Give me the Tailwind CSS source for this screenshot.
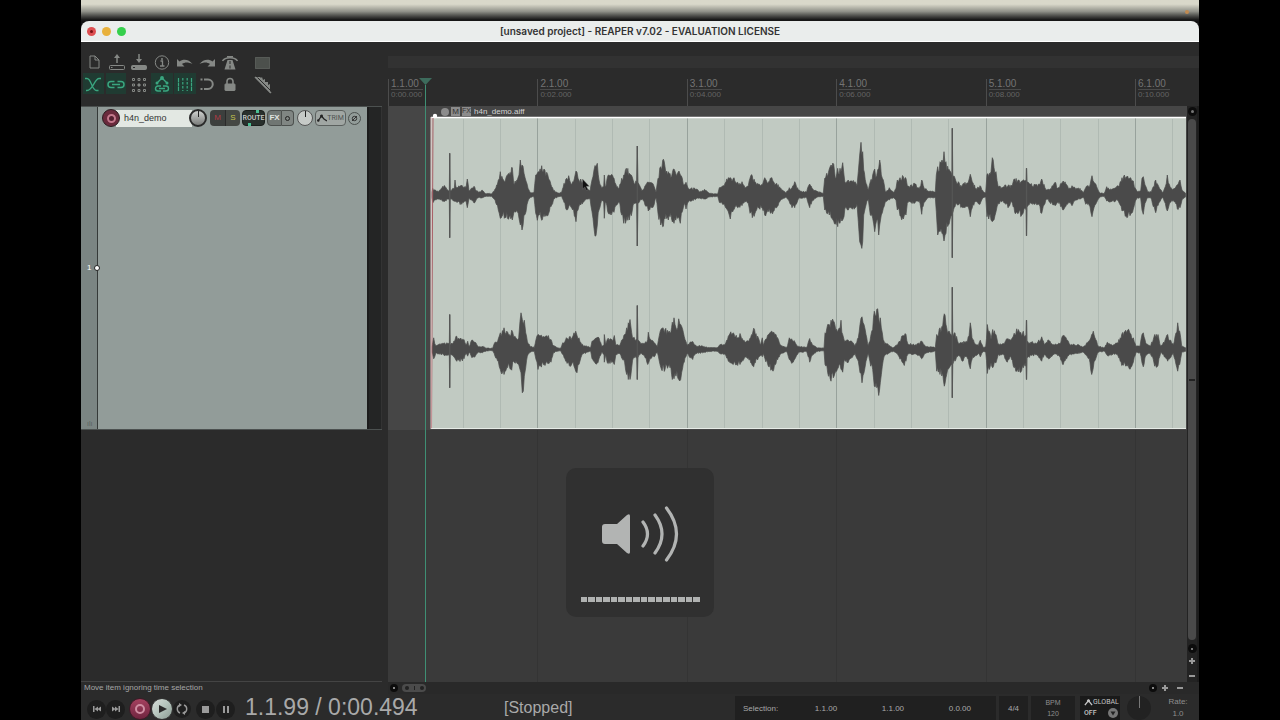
<!DOCTYPE html>
<html lang="en">
<head>
<meta charset="utf-8">
<title>[unsaved project] - REAPER v7.02</title>
<script src="https://cdn.jsdelivr.net/npm/@tailwindcss/browser@4"></script>
</head>
<body class="bg-black font-['Liberation_Sans',sans-serif]">
<div class="h-screen overflow-hidden px-[81px] flex flex-col">
  <div class="relative flex-none h-[21px] bg-linear-to-b from-[#d9d8ca] from-20% via-[#8f9088] via-55% to-[#161616] to-95%">
    <span class="absolute right-2.5 top-2.5 size-1 rounded-full bg-[#c08a50]"></span>
  </div>

  <div class="flex-1 min-h-0 flex flex-col bg-[#111]">
    <header class="relative flex-none h-[21px] rounded-t-lg bg-[#eaedec] flex items-center justify-center border-b border-white">
      <div class="absolute left-1.5 top-1.5 flex gap-[6px]">
        <button aria-label="Close" class="size-[9px] rounded-full bg-[#dd4f51] flex items-center justify-center"><span class="size-[3px] rounded-full bg-[#7a1014]"></span></button>
        <button aria-label="Minimize" class="size-[9px] rounded-full bg-[#e8b13c]"></button>
        <button aria-label="Zoom" class="size-[9px] rounded-full bg-[#35cf4b]"></button>
      </div>
      <h1 class="font-['Inter',sans-serif] text-[10px] font-semibold text-[#333] whitespace-nowrap">[unsaved project] - REAPER v7.02 - EVALUATION LICENSE</h1>
    </header>

    <main class="flex-1 min-h-0 flex bg-[#2b2b2b]">
      <!-- Toolbar and track control panel -->
      <section class="flex-none w-[307px] flex flex-col">
        <div class="flex-none h-16 pt-2 pl-[2px] flex items-start gap-[9px] text-[#858885]">
          <div class="grid grid-cols-7 w-[158px]">
            <button aria-label="New project" class="h-[23px] flex items-center justify-center"><svg width="20" height="20" viewBox="0 0 20 20" fill="none" stroke="currentColor"><path d="M6 4h5l4 4v8H6zM11 4v4h4"/></svg></button>
            <button aria-label="Open project" class="h-[23px] flex items-center justify-center"><svg width="20" height="20" viewBox="0 0 20 20" fill="none" stroke="currentColor"><rect x="2.500" y="13.500" width="15" height="4" rx="1"/><path d="M10 11V5" stroke-width="1.500"/><path d="M4 15.500h1.500"/><path d="M7 6l3-4 3 4z" fill="currentColor" stroke="none"/></svg></button>
            <button aria-label="Save project" class="h-[23px] flex items-center justify-center"><svg width="20" height="20" viewBox="0 0 20 20" fill="none" stroke="currentColor"><rect x="2.500" y="13.500" width="15" height="4" rx="1" fill="currentColor"/><path d="M10 2v6" stroke-width="1.500"/><path d="M7 7l3 4 3-4z" fill="currentColor" stroke="none"/><path d="M4 15.500h2" stroke="#2b2b2b"/></svg></button>
            <button aria-label="Project settings" class="h-[23px] flex items-center justify-center"><svg width="20" height="20" viewBox="0 0 20 20" fill="none" stroke="currentColor"><circle cx="10" cy="10.500" r="6.700"/><path d="M8.500 9h2v5M8 14h4.500" stroke-width="1.300"/><circle cx="10" cy="7" r="1" fill="currentColor" stroke="none"/></svg></button>
            <button aria-label="Undo" class="h-[23px] flex items-center justify-center"><svg width="20" height="20" viewBox="0 0 20 20" fill="currentColor"><path d="M2 7v7.500h7.500L7 12c3-2 6-2 10.500 0C14 7 8 6.500 4.500 9.500z"/></svg></button>
            <button aria-label="Redo" class="h-[23px] flex items-center justify-center"><svg width="20" height="20" viewBox="0 0 20 20" fill="currentColor"><path d="M18 7v7.500h-7.500L13 12c-3-2-6-2-10.500 0C6 7 12 6.500 15.500 9.500z"/></svg></button>
            <button aria-label="Metronome" class="h-[23px] flex items-center justify-center"><svg width="20" height="20" viewBox="0 0 20 20" fill="none" stroke="currentColor"><path d="M2.500 9C5 4.500 15 4.500 17.500 9" stroke-width="1.500"/><path d="M7.500 8h5l3 9.500h-11zM7 4h6v1.500H7z" fill="currentColor" stroke="none"/><path d="M10 9v3M10 13.500v3" stroke="#2b2b2b"/></svg></button>
            <button aria-label="Auto crossfade" class="h-[21px] mr-[2px] bg-[#203b32] text-[#3aa780] flex items-center justify-center"><svg width="20" height="20" viewBox="0 0 20 20" fill="none" stroke="currentColor" stroke-width="1.300"><path d="M2 4.500h2C8.500 4.500 8.500 16.500 13.500 16.500h2M18 4.500h-2C11.500 4.500 10 16.500 4 16.500H3"/></svg></button>
            <button aria-label="Item grouping" class="h-[21px] mr-[2px] bg-[#203b32] text-[#3aa780] flex items-center justify-center"><svg width="20" height="20" viewBox="0 0 20 20" fill="none" stroke="currentColor" stroke-width="1.500"><path d="M8.500 7.500H5a3 3 0 000 6h3.500M11.500 7.500H15a3 3 0 010 6h-3.500M6 10.500h8"/></svg></button>
            <button aria-label="Ripple editing" class="h-[21px] flex items-center justify-center"><svg width="20" height="20" viewBox="0 0 20 20" fill="none" stroke="currentColor"><path d="M3.500 4.500h2v2h-2zM9 4.500h2v2H9zM14.500 4.500h2v2h-2zM3.500 10h2v2h-2zM14.500 10h2v2h-2zM3.500 15.500h2v2h-2zM9 15.500h2v2H9zM14.500 15.500h2v2h-2z"/><path d="M9 10h2v2H9z" fill="currentColor"/></svg></button>
            <button aria-label="Move envelopes" class="h-[21px] bg-[#203b32] text-[#3aa780] flex items-center justify-center"><svg width="20" height="20" viewBox="0 0 20 20" fill="none" stroke="currentColor" stroke-width="1.400"><path d="M5 9l5-5 5 5"/><circle cx="10" cy="4" r="1.200" fill="currentColor"/><circle cx="5" cy="9" r=".8"/><circle cx="15" cy="9" r=".8"/><path d="M9 12H6a2.500 2.500 0 000 5h3M11 12h3a2.500 2.500 0 010 5h-3M7 14.500h6"/></svg></button>
            <button aria-label="Grid lines" class="h-[21px] ml-px bg-[#203b32] text-[#3aa780] flex items-center justify-center"><svg width="20" height="20" viewBox="0 0 20 20" fill="none" stroke="currentColor" stroke-width="1.200"><path d="M3.500 4v13M16.500 4v13" stroke-dasharray="4 .5"/><path d="M7.800 4v13M12.200 4v13" stroke-dasharray="2.500 1.500"/></svg></button>
            <button aria-label="Snap" class="h-[21px] flex items-center justify-center"><svg width="20" height="20" viewBox="0 0 20 20" fill="none" stroke="currentColor" stroke-width="2"><path d="M7 5.500h4a4.700 4.700 0 010 9.500H7"/><path d="M3.500 5.500h2M3.500 15h2"/></svg></button>
            <button aria-label="Lock" class="h-[21px] flex items-center justify-center"><svg width="20" height="20" viewBox="0 0 20 20" fill="none" stroke="currentColor"><rect x="5" y="10" width="10" height="6.500" rx=".5" fill="currentColor"/><path d="M7 10V7.500a3 3 0 016 0V10" stroke-width="1.600"/></svg></button>
          </div>
          <div class="flex flex-col">
            <button aria-label="Selection" class="h-[23px] flex items-center"><svg width="22" height="20" viewBox="0 0 22 20"><rect x="5.500" y="5.500" width="14" height="11" fill="#4c504c" stroke="#747a74" stroke-dasharray="1 1"/></svg></button>
            <button aria-label="Edit tools" class="h-[21px] flex items-center"><svg width="22" height="20" viewBox="0 0 22 20"><path d="M5 3h5l1 1 1-1 1 3 2-1v3h3v3l2-1v9z" fill="currentColor"/><path d="M5 3l16 16" stroke="currentColor" stroke-width="1.500"/><path d="M7.500 3.500L20 16" stroke="#2b2b2b"/></svg></button>
          </div>
        </div>

        <div class="flex-none h-[324px] w-[301px] flex border-y border-[#4c5150]">
          <div class="relative w-[17px] bg-[#7b8583] border-r border-[#353938] flex items-center pl-1.5 text-[8px] text-white">1
            <span class="absolute -right-[3px] top-1/2 size-[6px] -translate-y-1/2 rounded-full bg-white border border-[#222]"></span>
            <span class="absolute left-1.5 bottom-0 text-[7px] text-[#59615f]">ılı</span>
          </div>
          <div class="flex-1 bg-[#929c99] pt-[2px] pl-1">
            <div class="flex items-center h-[18px]">
              <button aria-label="Record arm" class="z-10 size-[18px] rounded-full bg-[#6a2a3c] border border-[#2c1c20] flex items-center justify-center"><span class="size-[9px] rounded-full border-2 border-[#c4788c] bg-[#542030]"></span></button>
              <input aria-label="Track name" value="h4n_demo" class="-ml-1 pl-2 w-[76px] h-[17px] bg-[#e3e8e3] text-[9px] text-[#333]">
              <button aria-label="Volume" class="z-10 -ml-[3px] size-[18px] rounded-full bg-linear-to-b from-[#d0d2d0] to-[#7a7c7a] border-2 border-[#2a2a2a] flex items-start justify-center"><span class="w-px h-1.5 bg-[#222]"></span></button>
              <button aria-label="Mute" class="ml-[3px] w-[15px] h-4 rounded-l-sm bg-[#3c3f3d] text-[8px] text-[#b03a44]">M</button>
              <button aria-label="Solo" class="w-[15px] h-4 rounded-r-sm bg-[#454844] border-l border-[#2a2a2a] text-[8px] text-[#c6c44c]">S</button>
              <button class="relative ml-[2px] w-[23px] h-4 rounded-sm bg-[#29302d] border border-[#1c1f1d] font-['Roboto',sans-serif] text-[7px] font-medium text-[#c8ccc8] flex items-center justify-center">ROUTE<span class="absolute left-[5px] -bottom-px size-[3px] bg-[#49c094]"></span><span class="absolute right-[5px] -top-px size-[3px] bg-[#49c094]"></span></button>
              <button class="ml-[2px] w-[15px] h-4 rounded-l-sm bg-[#707673] border border-[#4c504e] text-[8px] font-bold text-[#e0e4e0] flex items-center justify-center">FX</button>
              <button aria-label="FX bypass" class="w-[12px] h-4 rounded-r-sm bg-[#808683] border border-l-0 border-[#4c504e] flex items-center justify-center"><span class="size-[5px] rounded-full border border-[#222]"></span></button>
              <button aria-label="Pan" class="ml-[3px] size-[16px] rounded-full bg-[#c6cac7] border border-[#555] flex items-start justify-center"><span class="w-px h-1.5 bg-[#222]"></span></button>
              <button class="ml-[2px] w-[31px] h-4 rounded-sm bg-[#a0a6a3] border border-[#5b605e] font-['Roboto',sans-serif] text-[7px] text-[#4f5452] flex items-center justify-center"><svg width="10" height="10" viewBox="0 0 10 10" fill="none" stroke="#222" stroke-width="1.300"><path d="M1 8l3.500-5L7 6l3 2"/><circle cx="4.500" cy="3" r=".8" fill="#222"/><circle cx="1.300" cy="7.500" r=".6"/></svg>TRIM</button>
              <button aria-label="Phase" class="ml-[2px] size-[13px] rounded-full border border-[#4b504e] text-[#333] flex items-center justify-center"><svg width="9" height="9" viewBox="0 0 9 9" fill="none" stroke="currentColor"><circle cx="4.500" cy="4.500" r="2.200"/><path d="M2 7l5-5"/></svg></button>
            </div>
          </div>
          <div class="w-[15px] bg-[#242525] border-l-2 border-[#1c1c1c] flex justify-end"><span class="w-px bg-[#333]"></span></div>
        </div>

        <div class="flex-1"></div>
        <p class="flex-none w-[301px] h-[13px] border-t border-[#444] pl-[3px] text-[8px] leading-[11px] text-[#a5a5a5] whitespace-nowrap">Move item ignoring time selection</p>
      </section>

      <!-- Arrange view -->
      <section class="relative flex-1 min-w-0 flex flex-col">
        <div class="flex-none mt-3.5 h-3 bg-[#323232]"></div>
        <div class="flex-none h-[38px] pt-[11px] pr-3 flex text-[#747474] whitespace-nowrap">
          <div class="w-[18.7%] border-l border-[#4c4c4c] pl-[2px]"><span class="block w-8 border-b border-[#4a4a4a] text-[10px] leading-[10px]">1.1.00</span><span class="block text-[8px] leading-[9px] text-[#646464]">0:00.000</span></div>
          <div class="w-[18.7%] border-l border-[#4c4c4c] pl-[2px]"><span class="block w-8 border-b border-[#4a4a4a] text-[10px] leading-[10px]">2.1.00</span><span class="block text-[8px] leading-[9px] text-[#646464]">0:02.000</span></div>
          <div class="w-[18.7%] border-l border-[#4c4c4c] pl-[2px]"><span class="block w-8 border-b border-[#4a4a4a] text-[10px] leading-[10px]">3.1.00</span><span class="block text-[8px] leading-[9px] text-[#646464]">0:04.000</span></div>
          <div class="w-[18.7%] border-l border-[#4c4c4c] pl-[2px]"><span class="block w-8 border-b border-[#4a4a4a] text-[10px] leading-[10px]">4.1.00</span><span class="block text-[8px] leading-[9px] text-[#646464]">0:06.000</span></div>
          <div class="w-[18.7%] border-l border-[#4c4c4c] pl-[2px]"><span class="block w-8 border-b border-[#4a4a4a] text-[10px] leading-[10px]">5.1.00</span><span class="block text-[8px] leading-[9px] text-[#646464]">0:08.000</span></div>
          <div class="flex-1 min-w-0 border-l border-[#4c4c4c] pl-[2px]"><span class="block w-8 border-b border-[#4a4a4a] text-[10px] leading-[10px]">6.1.00</span><span class="block text-[8px] leading-[9px] text-[#646464]">0:10.000</span></div>
        </div>

        <div class="flex-1 min-h-0 flex">
          <div class="flex-1 min-w-0 flex flex-col bg-[#3a3a3a]">
            <div class="relative flex-none h-[324px]">
              <svg class="block w-full h-full" viewBox="0 0 799 324" preserveAspectRatio="none">
                <rect width="799" height="324" fill="#464646"/>
                <rect x="43" y="11" width="755" height="312" fill="#c1cac2"/>
                <path id="beats" stroke="#b0bab3" stroke-width="1" fill="none"/>
                <path id="bars" stroke="#98a29c" stroke-width="1" fill="none"/>
                <g fill="#4a4a4a" stroke="#4a4a4a" stroke-width=".7"><path id="waveL"/><path id="waveR"/></g>
                <path id="spikes" stroke="#565756" stroke-width="1.300"/>
                <path d="M43 11.500H798" stroke="#fff" stroke-width="1.600"/>
                <path d="M43 322.500H798" stroke="#e6ebe6"/>
                <path d="M43.500 322L45 12" stroke="#a85f66" fill="none"/>
                <path d="M43 11V323" stroke="#e0c4c4"/>
                <circle cx="47" cy="10" r="2.200" fill="#fff"/>
                <path d="M194.500 73v10l2.300-2 1.700 3.500 1.500-.8-1.700-3.400h3z" fill="#111" stroke="#777" stroke-width=".4"/>
              </svg>
              <div class="absolute left-[53px] top-0 h-[11px] flex items-center gap-[2px] text-[8px] text-[#d4d4d4]">
                <span class="size-[8px] rounded-full bg-[#8c8c8c]"></span>
                <button class="w-[9px] h-[9px] bg-[#8c8c8c] text-[#333] flex items-center justify-center">M</button>
                <button class="w-[9px] h-[9px] bg-[#8c8c8c] text-[#333] text-[7px] flex items-center justify-center">FX</button>
                <span class="pl-px">h4n_demo.aiff</span>
              </div>
            </div>
            <svg class="block w-full flex-1 min-h-0" viewBox="0 0 799 252" preserveAspectRatio="none"><path id="lowerBars" stroke="#343434" fill="none"/></svg>
          </div>
          <div class="flex-none w-3 flex flex-col items-center bg-[#232323] border-r-2 border-[#1d1d1d]">
            <button aria-label="Scroll up" class="mt-px size-[9px] rounded-full bg-[#0c0c0c] flex items-center justify-center"><span class="size-[3px] rounded-full bg-[#777]"></span></button>
            <div class="mt-[3px] flex-1 w-[8px] rounded-sm bg-[#4a4a4a] flex items-center justify-center"><span class="w-1.5 h-0.5 bg-[#222]"></span></div>
            <button aria-label="Scroll down" class="mt-[4px] size-[9px] rounded-full bg-[#0c0c0c] flex items-center justify-center"><span class="size-[2px] bg-[#777]"></span></button>
            <button aria-label="Zoom in vertically" class="mt-[4px] text-[#999]"><svg width="8" height="8" viewBox="0 0 8 8" stroke="currentColor" stroke-width="2"><path d="M1 4h6M4 1v6"/></svg></button>
            <button aria-label="Zoom out vertically" class="mt-[7px] mb-[2px] text-[#999]"><svg width="8" height="8" viewBox="0 0 8 8" stroke="currentColor" stroke-width="2"><path d="M1 4h6"/></svg></button>
          </div>
        </div>

        <div class="flex-none h-3 pr-[15px] pl-[2px] flex items-center bg-[#292929]">
          <button aria-label="Scroll left" class="size-[8px] rounded-full bg-[#0c0c0c] flex items-center justify-center"><span class="size-[2px] bg-[#888]"></span></button>
          <div class="ml-1 w-6 h-[8px] rounded-full bg-[#4b4b4b] flex items-center justify-around"><span class="size-1 rounded-full bg-[#222]"></span><span class="w-px h-1 bg-[#222]"></span><span class="size-1 rounded-full bg-[#222]"></span></div>
          <div class="flex-1"></div>
          <button aria-label="Scroll right" class="size-[8px] rounded-full bg-[#0c0c0c] flex items-center justify-center"><span class="size-[2px] bg-[#888]"></span></button>
          <button aria-label="Zoom in" class="ml-1 text-[#999]"><svg width="8" height="8" viewBox="0 0 8 8" stroke="currentColor" stroke-width="2"><path d="M1 4h6M4 1v6"/></svg></button>
          <button aria-label="Zoom out" class="ml-[7px] text-[#999]"><svg width="8" height="8" viewBox="0 0 8 8" stroke="currentColor" stroke-width="2"><path d="M1 4h6"/></svg></button>
        </div>

        <!-- Play cursor -->
        <div class="absolute left-[31px] top-9 bottom-3 w-[13px] flex flex-col items-center pointer-events-none">
          <svg width="13" height="7" viewBox="0 0 13 7"><path d="M0 0h13L6.500 7z" fill="#3d6b5c"/></svg>
          <span class="flex-1 w-px bg-[#3f8f74]"></span>
        </div>
      </section>
    </main>

    <footer class="flex-none h-[26px] bg-[#2b2b2b] flex items-start overflow-hidden text-[#a9a9a9]">
      <div class="flex items-center h-[30px] pl-1.5 text-[#9a9a9a]">
        <button aria-label="Go to start" class="size-[19px] rounded-full bg-[#1e1e1e] flex items-center justify-center"><svg width="8" height="8" viewBox="0 0 8 8" fill="currentColor"><path d="M0 1h1.500v6H0zM1.500 4L5 1.500v5zM4.500 4L8 1.500v5z"/></svg></button>
        <button aria-label="Go to end" class="size-[19px] rounded-full bg-[#1e1e1e] flex items-center justify-center"><svg width="8" height="8" viewBox="0 0 8 8" fill="currentColor"><path d="M8 1H6.500v6H8zM6.500 4L3 1.500v5zM3.500 4L0 1.500v5z"/></svg></button>
        <button aria-label="Record" class="ml-1 size-[22px] rounded-full bg-linear-to-b from-[#a5415f] to-[#702540] border border-[#3d1a26] flex items-center justify-center"><span class="size-[10px] rounded-full border-2 border-[#cf8ea2]"></span></button>
        <button aria-label="Play" class="size-[22px] rounded-full bg-linear-to-br from-[#d9dfda] via-[#b4c4bc] to-[#8a9a92] border border-[#333] flex items-center justify-center text-[#2a2a2a]"><svg width="10" height="10" viewBox="0 0 10 10" fill="currentColor"><path d="M2 1l8 4-8 4z"/></svg></button>
        <button aria-label="Repeat" class="size-[18px] rounded-full bg-[#1e1e1e] flex items-center justify-center"><svg width="12" height="12" viewBox="0 0 12 12" fill="none" stroke="currentColor" stroke-width="1.400"><path d="M4 10A4.300 4.300 0 014 2M8 2a4.300 4.300 0 010 8"/><path d="M3 0l3 2-3 2zM9 8l-3 2 3 2z" fill="currentColor" stroke="none"/></svg></button>
        <button aria-label="Stop" class="ml-[5px] size-[19px] rounded-full bg-[#1e1e1e] flex items-center justify-center"><span class="size-[7px] bg-current"></span></button>
        <button aria-label="Pause" class="ml-px size-[19px] rounded-full bg-[#1e1e1e] flex items-center justify-center gap-[2px]"><span class="w-[2px] h-[7px] bg-current"></span><span class="w-[2px] h-[7px] bg-current"></span></button>
      </div>
      <div class="ml-2.5 w-[259px] text-[23px] leading-[27px] whitespace-nowrap">1.1.99 / 0:00.494</div>
      <div class="text-[16px] leading-[28px]">[Stopped]</div>
      <div class="flex-1"></div>
      <div class="mt-[2px] flex h-[25px] gap-[3px] text-[8px]">
        <div class="w-[261px] pl-2 pr-[25px] bg-[#202020] flex items-center justify-between"><span>Selection:</span><span class="pl-1">1.1.00</span><span class="px-3">1.1.00</span><span>0.0.00</span></div>
        <button class="w-[29px] bg-[#202020]">4/4</button>
        <div class="w-11 bg-[#202020] flex flex-col items-center gap-[2px] text-[7px] leading-[9px] pt-[2px] text-[#8e8e8e]"><span>BPM</span><span>120</span></div>
        <div class="ml-[2px] w-10 bg-[#1a1a1a] font-['Roboto',sans-serif] leading-[10px] pt-[1px] pl-[4px] text-[#c4c4c4]">
          <div class="flex items-center"><svg width="9" height="9" viewBox="0 0 10 10" fill="none" stroke="currentColor" stroke-width="1.500"><path d="M1 8l4-5 4 5"/><circle cx="5" cy="3" r="1" fill="currentColor"/></svg><span class="text-[7px]">GLOBAL</span></div>
          <div class="flex items-center justify-between pt-px pr-[2px]"><span class="text-[7px] font-medium">OFF</span><svg width="10" height="10" viewBox="0 0 10 10"><circle cx="5" cy="5" r="5" fill="#777"/><path d="M2.500 3.500h5L5 7.500z" fill="#222"/></svg></div>
        </div>
        <button aria-label="Play rate" class="ml-[4px] size-6 rounded-full bg-[#222] flex justify-center"><span class="w-px h-3 bg-[#777]"></span></button>
        <label class="w-[45px] pl-[3px] flex flex-col items-center text-[8px] leading-[12px] text-[#8e8e8e]"><span>Rate:</span><span>1.0</span></label>
      </div>
    </footer>
  </div>
</div>

<!-- Volume overlay -->
<div class="fixed left-1/2 top-[468px] -translate-x-1/2 w-[148px] h-[149px] rounded-[10px] bg-[#303030] flex flex-col items-center">
  <svg class="mt-[36px]" width="80" height="60" viewBox="0 0 80 60" fill="none">
    <path d="M5 20h12l10-9q3-2 3 1v36q0 3-3 1l-10-9H5q-3 0-3-3V23q0-3 3-3z" fill="#b2b4b3"/>
    <path d="M43 18q9 12 0 24M55 11q14 19 0 38M66.500 4q20 26 0 52" stroke="#b2b4b3" stroke-width="3.200" stroke-linecap="round"/>
  </svg>
  <div class="mt-[33px] w-[119px] h-[5px] grid grid-cols-16 gap-px" id="level"></div>
</div>

<script>
const $ = id => document.getElementById(id);
$('level').innerHTML = '<i class="bg-[#b0b2b1]"></i>'.repeat(16);

// Beat and bar lines of the time grid
let beats = '', bars = '', lower = '';
for (let k = 2; k < 22; k++) {
  const x = Math.round(37.35 * k) + 0.5;
  if (k % 4) beats += `M${x} 13V322`;
  else { bars += `M${x} 12V322`; lower += `M${x} 0V252`; }
}
$('beats').setAttribute('d', beats);
$('bars').setAttribute('d', bars);
$('lowerBars').setAttribute('d', lower);

// Peaks: position, height above and depth below the centre, in thirds of a unit
const left = [
 [420,`35 8 8,38 20 22,47 14 14,55 10 12,72 28 20,85 12 12,88 14 14,89 125 128,90.5 15 12,103 20 18,105 45 20,110 22 22,125 30 28,138 22 18,142 48 38,147 12 10,162 26 24,175 8 8,187 14 8,195 5 5,215 4 4,225 18 14,235 45 45,241 70 70,248 48 60,258 52 68,268 60 65,277 82 75,281 35 55,292 45 50,297 60 70,301 105 90,306 90 105,312 65 60,318 42 50,324 20 18,332 6 6,342 8 6,347 60 55,352 65 76,358 70 60,365 88 76,372 78 65,380 68 60,386 48 55,395 25 30,403 14 12,415 6 5,425 8 4,432 35 22,440 50 45,446 58 35,452 35 35,458 40 45,468 72 80,474 50 45,482 48 30,495 25 15,510 12 10,516 45 50,522 75 100,528 85 122,532 95 90,537 45 45,545 20 15,551 25 20,553 60 70,556 25 20,565 60 55,573 60 60,582 50 52,590 25 30,597 20 20,605 50 60,611 60 85,619 80 75,628 65 75,634 60 62,642 35 25,650 40 25,652 147 153,654 38 25,663 20 15,668 15 12,675 28 30,685 38 48,700 32 35,708 8 8,714 50 55,722 85 90,728 104 95,735 85 72,745 70 75`],
 [670,`0 65 65,12 78 85,20 58 60,27 72 70,31 60 85,37 50 50,43 30 25,48 38 42,55 20 22,65 22 18,78 18 12,90 10 10,105 16 12,118 5 6,143 3 4,148 22 22,160 28 28,168 40 40,175 52 50,181 52 72,190 50 45,203 38 38,216 40 32,225 22 18,235 28 25,240 50 55,247 57 68,255 38 55,265 32 38,277 30 40,284 52 60,292 35 50,303 50 55,312 38 48,320 35 38,333 20 15,348 6 6,358 22 20,366 22 38,374 40 38,385 15 12,395 10 10,410 10 8,413 22 20,419 33 38,426 20 18,440 12 7,460 5 4,464 50 45,470 65 55,478 78 60,486 85 70,491 92 78,496 50 85,503 80 95,510 80 85,518 97 75,522 60 65,527 35 35,535 45 45,545 42 40,555 40 38,561 28 28,565 70 80,569 120 140,573 158 150,578 130 140,581 75 60,588 35 30,595 15 12,601 40 60,608 60 70,614 78 110,620 58 75,626 80 120,629 105 90,634 60 60,640 45 40,646 10 20,658 22 15,670 8 8,678 20 15,682 45 45,690 52 62,700 55 72,708 50 60,712 28 25,722 30 22,733 35 25,745 22 20`],
 [920,`0 25 25,5 45 58,12 22 22,25 12 8,46 10 8,49 60 50,53 85 120,60 100 110,66 105 115,72 130 138,78 100 115,85 75 90,92 70 65,96 60 60,97 200 188,98.5 55 55,105 50 35,115 40 30,125 25 35,135 38 38,145 38 35,151 62 65,157 38 38,168 20 20,180 28 28,190 10 8,197 8 6,201 62 65,206 55 72,213 70 75,217 112 80,222 82 75,228 70 50,234 28 25,245 22 20,257 30 28,264 28 38,275 28 20,284 48 52,295 45 55,305 42 60,315 42 40,318.5 45 45,319.5 80 122,321 40 35,332 32 25,345 30 28,355 32 28,365 48 55,372 32 30,380 15 12,390 18 22,405 38 32,415 22 22,430 42 45,440 30 28,450 20 20,456 28 32,470 20 15,480 20 12,490 6 6,497 22 28,510 30 35,516 58 65,522 38 38,530 25 22,540 6 6,553 5 4,560 25 18,572 18 20,582 20 20,592 28 15,598 28 25,606 52 48,618 55 62,630 52 62,640 42 42,646 20 18,653 10 8,662 12 10,666 50 45,670 55 58,675 30 25,683 10 8,692 10 8,700 25 35,707 45 53,714 30 32,728 6 6,736 25 25,742 60 48,748 32 28,757 15 18,765 20 20,772 30 42,780 45 38,786 15 15,797 5 5`]];
const right = [
 [420,`35 8 8,38 20 15,41 35 28,47 12 12,65 18 15,75 18 18,86 18 16,88 15 15,89 105 115,90.5 15 15,104 25 25,108 40 32,120 32 36,132 30 28,138 14 12,143 25 20,148 8 8,155 28 24,165 22 22,175 8 8,187 10 10,200 4 4,218 4 4,225 22 20,235 32 35,241 50 60,252 65 75,260 55 55,268 45 50,275 58 62,281 38 35,290 32 40,296 35 45,300 85 60,303 110 70,307 90 130,310 75 125,313 88 80,317 50 55,322 25 20,330 10 8,343 6 5,348 30 30,354 45 60,362 42 48,375 38 48,385 42 42,393 30 38,400 12 10,412 5 5,423 5 5,428 20 15,437 30 35,448 38 48,456 35 42,462 50 50,467 55 65,471 42 70,477 35 45,485 15 18,500 10 8,512 6 5,516 25 28,525 32 40,531 35 42,537 35 28,545 10 8,552 15 15,553 45 38,557 15 15,562 30 40,570 32 42,578 25 35,583 42 45,587 15 18,598 12 12,607 30 28,614 45 40,620 65 75,625 80 90,630 90 90,635 50 55,640 35 25,648 30 25,650.5 30 25,652 132 90,654 30 25,662 18 12,673 18 18,683 30 45,685 52 42,692 30 28,703 20 22,712 8 8,718 42 35,724 62 58,735 60 60,745 50 50`],
 [670,`0 50 55,7 82 90,12 95 88,18 65 80,26 92 90,32 75 90,38 60 55,45 30 25,52 12 12,60 22 25,68 24 30,78 12 12,98 10 10,115 6 6,140 5 5,150 15 12,165 15 15,175 40 35,180 48 40,190 50 45,203 35 48,210 48 45,222 28 28,235 25 25,247 45 48,251 64 52,256 45 40,265 35 25,272 15 18,277 35 22,280 12 12,285 28 28,295 45 50,305 55 58,309 50 65,318 45 42,330 15 15,350 6 6,358 35 30,367 28 40,375 22 28,385 10 10,410 6 6,419 33 38,427 15 18,440 6 6,462 4 4,465 50 45,473 75 70,483 88 95,490 85 85,497 60 65,505 60 55,513 88 60,518 45 68,522 30 35,535 28 38,545 25 25,555 12 12,565 35 35,570 75 70,576 98 100,582 75 70,588 45 35,595 12 12,602 40 50,608 60 60,613 115 110,618 100 100,623 122 110,626 95 138,631 95 100,637 50 50,642 25 22,655 15 12,670 5 5,685 20 18,695 40 35,703 42 48,708 45 35,713 18 15,735 14 14`],
 [920,`0 20 20,5 25 28,15 12 12,30 8 8,46 6 6,50 45 65,60 65 75,68 70 70,73 107 110,80 65 75,88 55 55,96 40 45,97 187 145,98.5 40 45,105 50 35,112 28 22,120 20 20,127 22 35,140 25 20,147 40 45,151 80 58,156 35 30,165 18 20,175 12 12,181 28 22,190 6 6,197 8 8,202 75 72,208 55 60,213 30 40,218 60 55,228 45 40,234 15 18,250 18 15,262 32 38,272 28 20,280 40 50,290 62 65,300 50 68,310 55 55,318 40 40,319.5 88 90,321 25 25,335 22 18,350 18 15,365 38 35,373 15 15,386 28 28,400 15 15,418 18 20,430 42 45,440 30 28,450 15 15,475 14 12,490 8 8,500 20 18,510 30 40,515 45 75,520 55 55,527 30 28,535 10 8,553 5 5,562 22 18,578 12 15,592 20 14,605 45 48,617 58 50,628 55 58,640 35 38,648 10 10,660 10 10,666 45 40,670 50 52,677 20 18,690 10 10,700 30 30,704 45 50,714 45 48,722 10 10,735 28 22,743 45 35,750 28 25,760 15 12,768 50 45,773 80 65,779 55 45,785 10 10,797 5 5`]];
let spikes = '';
function wave(groups, cy) {
  let seed = 7;
  const rnd = () => (seed = (seed * 16807) % 2147483647) / 2147483647;
  const pts = groups.flatMap(([base, s]) => s.split(',').map(t => {
    const [x, u, d] = t.split(' ').map(Number);
    return [base - 388 + x / 3, u / 3, d / 3];
  }));
  const top = [], bottom = [];
  pts.forEach((p, i) => {
    top.push([p[0], cy - p[1]]); bottom.push([p[0], cy + p[2]]);
    const q = pts[i + 1];
    if (!q) return;
    // A peak that falls away at once is drawn as a full-width line too
    if (q[0] - p[0] < 0.9 && p[1] > q[1] * 1.5) spikes += `M${p[0].toFixed(1)} ${cy - p[1]}V${cy + p[2]}`;
    const n = Math.floor((q[0] - p[0]) / 0.7);
    for (let j = 1; j < n; j++) {
      const t = j / n, x = p[0] + (q[0] - p[0]) * t;
      top.push([x, cy - (p[1] + (q[1] - p[1]) * t) * (0.76 + 0.36 * rnd())]);
      bottom.push([x, cy + (p[2] + (q[2] - p[2]) * t) * (0.76 + 0.36 * rnd())]);
    }
  });
  return 'M' + top.concat(bottom.reverse()).map(p => p.map(v => v.toFixed(1)).join(' ')).join('L') + 'Z';
}
$('waveL').setAttribute('d', wave(left, 89));
$('waveR').setAttribute('d', wave(right, 243.5));
$('spikes').setAttribute('d', spikes);
</script>
</body>
</html>
